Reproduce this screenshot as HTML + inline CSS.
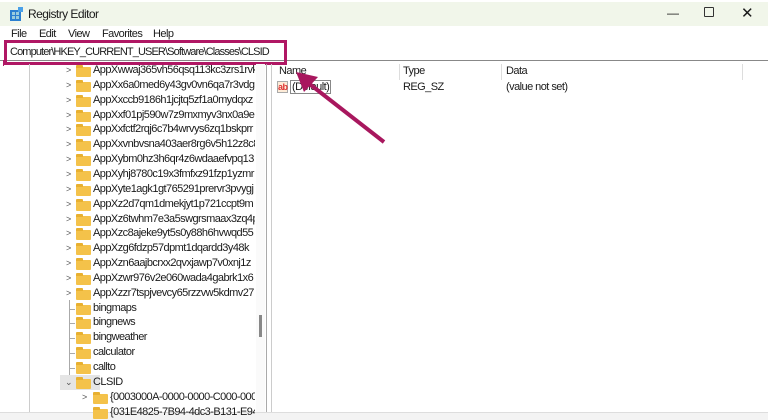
<!DOCTYPE html><html><head><style>
body{margin:0;width:768px;height:419px;background:#fff;font-family:"Liberation Sans",sans-serif;font-size:11px;color:#1a1a1a;position:relative;overflow:hidden;letter-spacing:-0.55px}
.a{position:absolute;white-space:nowrap}
.f{position:absolute;width:15px;height:10px;background:#f4c24a;border-radius:1px}
.f:before{content:"";position:absolute;left:0;top:-2px;width:7px;height:3px;background:#e8b030;border-radius:1px 1px 0 0}
.ch{position:absolute;font-size:9px;color:#555}
</style></head><body>
<div class="a" style="left:0;top:2px;width:768px;height:24px;background:#f1f6ea"></div>
<svg class="a" style="left:10px;top:7px" width="14" height="14"><rect x="0" y="3" width="11" height="11" fill="#2a7fd0"/><rect x="2" y="5" width="3" height="3" fill="#9cd"/><rect x="6" y="5" width="3" height="3" fill="#9cd"/><rect x="2" y="9" width="3" height="3" fill="#9cd"/><rect x="6" y="9" width="3" height="3" fill="#9cd"/><rect x="8" y="0" width="5" height="5" fill="#4aa0e8"/></svg>
<div class="a" style="left:28px;top:7px;font-size:12px">Registry Editor</div>
<div class="a" style="left:667px;top:6px;font-size:12px">—</div>
<div class="a" style="left:704px;top:7px;width:8px;height:8px;border:1.3px solid #333;border-radius:1px"></div>
<div class="a" style="left:741px;top:4px;font-size:15px">✕</div>
<div class="a" style="left:11px;top:28px">File</div><div class="a" style="left:39px;top:28px">Edit</div><div class="a" style="left:68px;top:28px">View</div><div class="a" style="left:102px;top:28px">Favorites</div><div class="a" style="left:153px;top:28px">Help</div>
<div class="a" style="left:0;top:42px;width:768px;height:18px;border-bottom:1px solid #888"></div>
<div class="a" style="left:4px;top:40px;width:277px;height:19px;border:3px solid #b01764"></div>
<div class="a" style="left:10px;top:46px;font-size:11px;letter-spacing:-0.88px">Computer\HKEY_CURRENT_USER\Software\Classes\CLSID</div>
<div class="a" style="left:3px;top:60px;width:1px;height:6px;background:#b01764"></div>
<div class="a" style="left:29px;top:64px;width:1px;height:349px;background:#ccc"></div>
<div class="a" style="left:256px;top:64px;width:9px;height:349px;background:#fafafa"></div>
<div class="a" style="left:259px;top:315px;width:3px;height:22px;background:#888"></div>
<div class="a" style="left:266px;top:64px;width:1px;height:349px;background:#aaa"></div>
<div class="a" style="left:271px;top:64px;width:1px;height:349px;background:#ccc"></div>
<div class="a" style="left:0;top:412px;width:768px;height:7px;background:#f3f3f3;border-top:1px solid #ddd"></div>
<div class="a" style="left:399px;top:64px;width:1px;height:16px;background:#ddd"></div>
<div class="a" style="left:501px;top:64px;width:1px;height:16px;background:#ddd"></div>
<div class="a" style="left:742px;top:64px;width:1px;height:16px;background:#ddd"></div>
<div class="a" style="left:279px;top:65px">Name</div><div class="a" style="left:403px;top:65px">Type</div><div class="a" style="left:506px;top:65px">Data</div>
<div class="a" style="left:277px;top:81px;font-size:9px;font-weight:bold;color:#d33;background:#fdecd8;border:1px solid #aaa;line-height:10px">ab</div>
<div class="a" style="left:290px;top:80px;border:1px solid #888;padding:0 1px;background:#fff">(Default)</div>
<div class="a" style="left:403px;top:81px">REG_SZ</div><div class="a" style="left:506px;top:81px">(value not set)</div>
<svg class="a" style="left:0;top:0" width="768" height="419"><line x1="384" y1="142" x2="307" y2="82" stroke="#a8175e" stroke-width="4"/><polygon points="296,72 318,77 304,92" fill="#a8175e"/></svg>
<div id="t"></div>
<script>
var rows=["AppXwwaj365vh56qsq113kc3zrs1rvk","AppXx6a0med6y43gv0vn6qa7r3vdg","AppXxccb9186h1jcjtq5zf1a0mydqxz","AppXxf01pj590w7z9mxmyv3nx0a9e","AppXxfctf2rqj6c7b4wrvys6zq1bskprr","AppXxvnbvsna403aer8rg6v5h12z8c8","AppXybm0hz3h6qr4z6wdaaefvpq13","AppXyhj8780c19x3fmfxz91fzp1yzmr","AppXyte1agk1gt765291prervr3pvygj","AppXz2d7qm1dmekjyt1p721ccpt9m","AppXz6twhm7e3a5swgrsmaax3zq4p","AppXzc8ajeke9yt5s0y88h6hvwqd55","AppXzg6fdzp57dpmt1dqardd3y48k","AppXzn6aajbcrxx2qvxjawp7v0xnj1z","AppXzwr976v2e060wada4gabrk1x6","AppXzzr7tspjvevcy65rzzvw5kdmv27","bingmaps","bingnews","bingweather","calculator","callto","CLSID","{0003000A-0000-0000-C000-0000","{031E4825-7B94-4dc3-B131-E946"];
var h="";
rows.forEach(function(r,i){var y=64+i*14.85;var x=i<22?76:93;
if(i<16)h+='<div class="ch" style="left:66px;top:'+(y+1)+'px">&gt;</div>';
else if(i<21)h+='<div class="a" style="left:69px;top:'+(y+7)+'px;width:6px;height:1px;background:#aaa"></div>';
else if(i==21)h+='<div class="a" style="left:60px;top:'+(y-1)+'px;width:40px;height:15px;background:#e5e5e5"></div><div class="ch" style="left:65px;top:'+(y+1)+'px">⌄</div>';
else if(i==22)h+='<div class="ch" style="left:82px;top:'+(y+1)+'px">&gt;</div>';
h+='<div class="f" style="left:'+x+'px;top:'+(y+3)+'px"></div><div class="a" style="left:'+(x+17)+'px;top:'+y+'px;width:'+(255-x-17)+'px;overflow:hidden">'+r+'</div>';});
h+='<div class="a" style="left:69px;top:300px;width:1px;height:75px;background:#aaa"></div>';
document.getElementById("t").innerHTML=h;
</script>
</body></html>
